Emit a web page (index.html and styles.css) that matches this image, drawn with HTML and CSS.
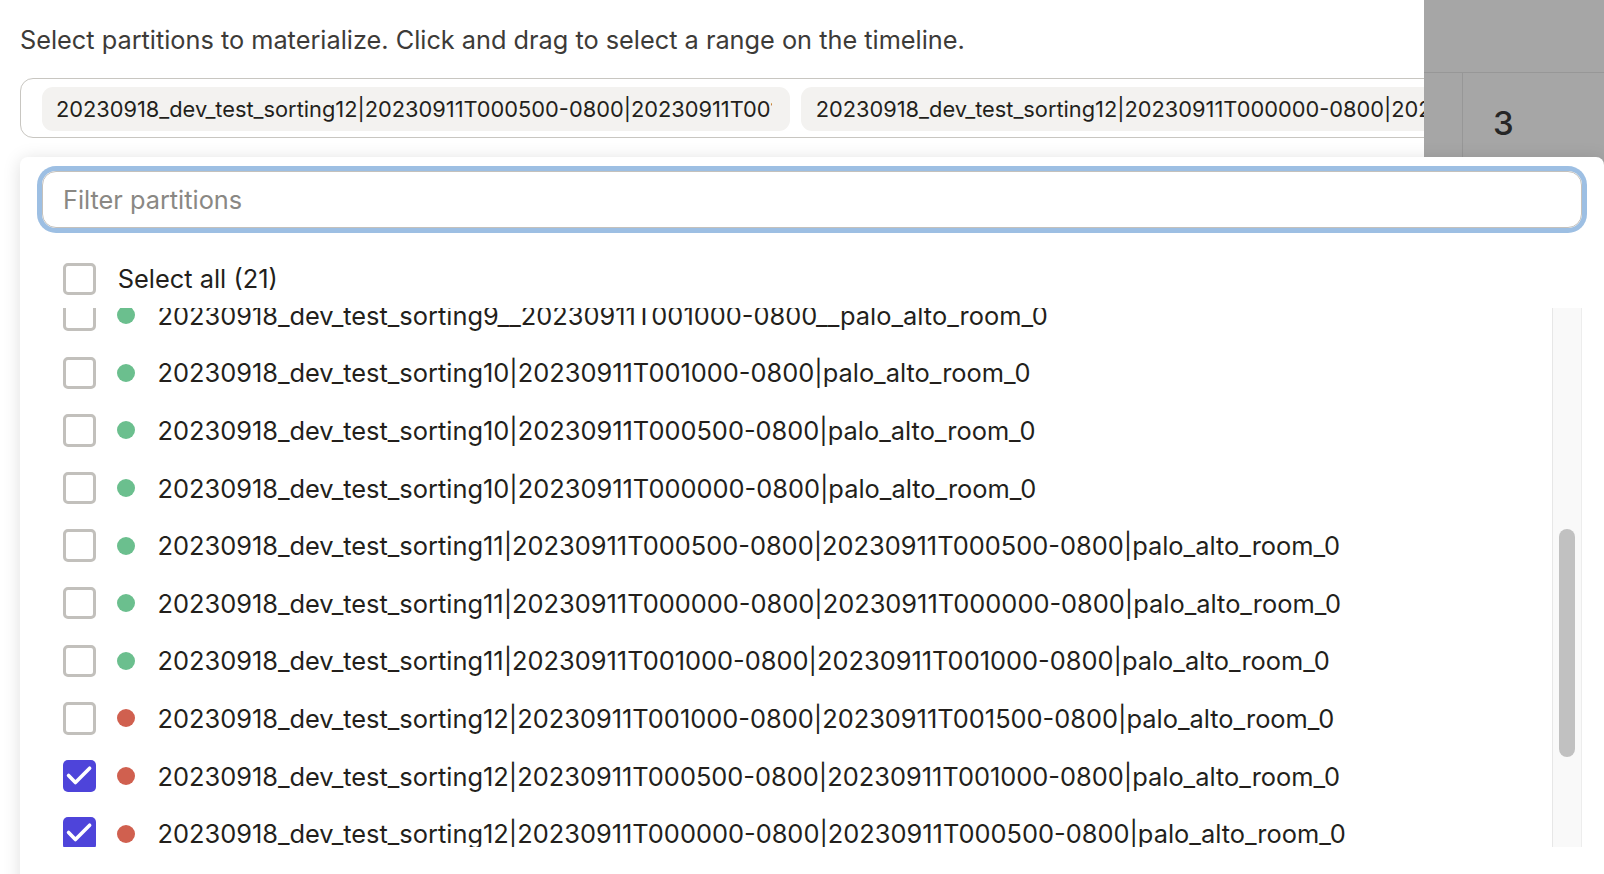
FILE: index.html
```html
<!DOCTYPE html>
<html lang="en">
<head>
<meta charset="utf-8">
<title>Select partitions</title>
<link rel="stylesheet" href="styles.css">
</head>
<body>
<div class="page">
  <section class="dialog">
    <p class="hint">Select partitions to materialize. Click and drag to select a range on the timeline.</p>
    <div class="tag-input">
      <span class="tag tag-first"><span class="tag-text">20230918_dev_test_sorting12|20230911T000500-0800|20230911T001000-0800|palo_alto_room_0</span></span>
      <span class="tag"><span class="tag-text">20230918_dev_test_sorting12|20230911T000000-0800|20230911T000500-0800|palo_alto_room_0</span></span>
    </div>
  </section>
  <aside class="backdrop">
    <div class="bd-top"></div>
    <div class="bd-row">
      <div class="bd-cell bd-narrow"></div>
      <div class="bd-cell bd-num">3</div>
    </div>
  </aside>
</div>

<div class="popover">
  <div class="filter">Filter partitions</div>
  <div class="row select-all">
    <span class="cb"></span>
    <span class="label">Select all (21)</span>
  </div>
  <div class="list-area">
    <div class="viewport">
      <div class="rows">
        <div class="row"><span class="cb"></span><span class="dot ok"></span><span class="label">20230918_dev_test_sorting9__20230911T001000-0800__palo_alto_room_0</span></div>
        <div class="row"><span class="cb"></span><span class="dot ok"></span><span class="label">20230918_dev_test_sorting10|20230911T001000-0800|palo_alto_room_0</span></div>
        <div class="row"><span class="cb"></span><span class="dot ok"></span><span class="label">20230918_dev_test_sorting10|20230911T000500-0800|palo_alto_room_0</span></div>
        <div class="row"><span class="cb"></span><span class="dot ok"></span><span class="label">20230918_dev_test_sorting10|20230911T000000-0800|palo_alto_room_0</span></div>
        <div class="row"><span class="cb"></span><span class="dot ok"></span><span class="label">20230918_dev_test_sorting11|20230911T000500-0800|20230911T000500-0800|palo_alto_room_0</span></div>
        <div class="row"><span class="cb"></span><span class="dot ok"></span><span class="label">20230918_dev_test_sorting11|20230911T000000-0800|20230911T000000-0800|palo_alto_room_0</span></div>
        <div class="row"><span class="cb"></span><span class="dot ok"></span><span class="label">20230918_dev_test_sorting11|20230911T001000-0800|20230911T001000-0800|palo_alto_room_0</span></div>
        <div class="row"><span class="cb"></span><span class="dot fail"></span><span class="label">20230918_dev_test_sorting12|20230911T001000-0800|20230911T001500-0800|palo_alto_room_0</span></div>
        <div class="row"><span class="cb checked"><svg viewBox="0 0 18 18"><polyline points="3.1,8.6 6.9,12.5 14.8,4.6"/></svg></span><span class="dot fail"></span><span class="label">20230918_dev_test_sorting12|20230911T000500-0800|20230911T001000-0800|palo_alto_room_0</span></div>
        <div class="row"><span class="cb checked"><svg viewBox="0 0 18 18"><polyline points="3.1,8.6 6.9,12.5 14.8,4.6"/></svg></span><span class="dot fail"></span><span class="label">20230918_dev_test_sorting12|20230911T000000-0800|20230911T000500-0800|palo_alto_room_0</span></div>
      </div>
    </div>
    <div class="track"><div class="thumb"></div></div>
  </div>
</div>
</body>
</html>
```

FILE: styles.css
```css
html, body {
  margin: 0;
  padding: 0;
  height: 874px;
  overflow: hidden;
  background: #ffffff;
  font-family: Inter, "Noto Sans", sans-serif;
}

.page {
  display: grid;
  grid-template-columns: 1424px 1fr;
  height: 874px;
}

.dialog {
  background: #ffffff;
  padding: 22px 0 0 20px;
  overflow: hidden;
}

.hint {
  margin: 0;
  font-size: 25.3px;
  line-height: 35px;
  color: #3d3b38;
  white-space: nowrap;
}

.tag-input {
  margin-top: 21px;
  width: 1500px;
  height: 60px;
  box-sizing: border-box;
  border: 1.8px solid #c8c6c1;
  border-radius: 13px;
  padding: 7.5px 20.5px;
  display: flex;
  gap: 11px;
  overflow: hidden;
}

.tag {
  flex: none;
  display: flex;
  height: 44.4px;
  line-height: 44.4px;
  padding: 0 14.4px;
  border-radius: 11px;
  background: #f3f2f0;
  color: #231f1b;
  font-size: 21.8px;
  white-space: nowrap;
  overflow: hidden;
}

.tag-text {
  display: block;
  overflow: hidden;
}

.tag-first .tag-text {
  max-width: 716px;
}

.tag-first {
  padding-right: 18.4px;
}

.backdrop {
  background: #a6a6a6;
  display: flex;
  flex-direction: column;
}

.bd-top {
  height: 72px;
  border-bottom: 1.5px solid #979797;
}

.bd-row {
  display: flex;
  flex: 1;
}

.bd-narrow {
  width: 38px;
  border-right: 1.5px solid #979797;
}

.bd-num {
  padding: 30px 0 0 30px;
  font-size: 33px;
  font-weight: 500;
  line-height: 40px;
  color: #262626;
}

.popover {
  position: absolute;
  left: 20px;
  right: 0;
  top: 157px;
  height: 740px;
  background: #ffffff;
  border-radius: 8px;
  box-shadow: 0 2px 18px rgba(0, 0, 0, 0.13);
  padding: 14.4px 22px 0 22px;
  box-sizing: border-box;
}

.filter {
  height: 57px;
  box-sizing: border-box;
  border: 1.8px solid #c4c1bc;
  border-radius: 14px;
  box-shadow: 0 0 0 5px #9dbfe3;
  padding-left: 20px;
  display: flex;
  align-items: center;
  font-size: 25.3px;
  color: #8a8884;
}

.row {
  display: flex;
  align-items: center;
  height: 57.6px;
  padding-left: 21.3px;
  color: #231f1b;
  font-size: 25.4px;
  white-space: nowrap;
}

.select-all {
  margin-top: 21.6px;
}

.select-all .label {
  margin-left: 22px;
}

.cb {
  flex: none;
  width: 32.4px;
  height: 32.4px;
  box-sizing: border-box;
  border: 3px solid #c2c0bc;
  border-radius: 5px;
  background: #ffffff;
  display: flex;
}

.cb.checked {
  border: none;
  background: #4e44da;
}

.cb svg {
  width: 100%;
  height: 100%;
}

.cb polyline {
  fill: none;
  stroke: #ffffff;
  stroke-width: 2;
  stroke-linecap: round;
  stroke-linejoin: round;
}

.dot {
  flex: none;
  width: 18px;
  height: 18px;
  border-radius: 50%;
  margin-left: 21.6px;
}

.dot.ok {
  background: #6bbf8e;
}

.dot.fail {
  background: #d0604f;
}

.rows .label {
  margin-left: 22.2px;
}

.list-area {
  display: flex;
  height: 539.8px;
}

.viewport {
  flex: 1;
  overflow: hidden;
}

.rows {
  margin-top: -21.1px;
}

.track {
  flex: none;
  width: 30px;
  box-sizing: border-box;
  background: #f9f9f9;
  border-left: 1.5px solid #e7e7e7;
  border-right: 1.5px solid #ededed;
  padding-top: 221px;
  display: flex;
  justify-content: center;
}

.thumb {
  width: 16px;
  height: 228px;
  border-radius: 8px;
  background: #c1c1c1;
}
```
